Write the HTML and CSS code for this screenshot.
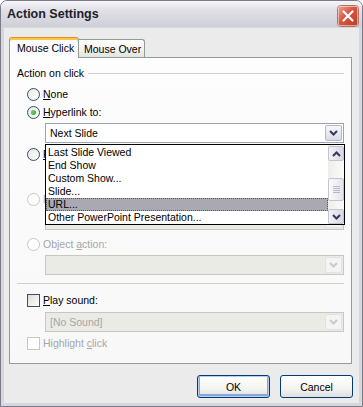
FILE: index.html
```html
<!DOCTYPE html>
<html lang="en">
<head>
    <meta charset="UTF-8">
    <title>Action Settings</title>
    <link rel="stylesheet" href="styles.css">
</head>
<body>
    <div class="window">
        <div class="titlebar">
            <span class="title">Action Settings</span>
            <svg class="close" width="22" height="22" viewBox="0 0 22 22">
                <defs>
                    <linearGradient id="closeFill" x1="0" y1="0" x2="1" y2="1">
                        <stop offset="0" stop-color="#eea08c"/>
                        <stop offset="0.45" stop-color="#d9563f"/>
                        <stop offset="1" stop-color="#bf3a27"/>
                    </linearGradient>
                </defs>
                <rect x="0.5" y="0.5" width="21" height="21" rx="3" fill="#fff" stroke="#a8766c"/>
                <rect x="1.5" y="1.5" width="19" height="19" rx="2" fill="url(#closeFill)"/>
                <path d="M6.5 6.5 L15.5 15.5 M15.5 6.5 L6.5 15.5" stroke="#ffffff" stroke-width="2.2" stroke-linecap="round"/>
            </svg>
        </div>
        <div class="client">
            <div class="tabs">
                <div class="tab active">Mouse Click</div>
                <div class="tab">Mouse Over</div>
            </div>
            <div class="panel">
                <div class="group-title"><span>Action on click</span><span class="line"></span></div>

                <div class="opt first"><span class="radio"></span><span class="label"><u>N</u>one</span></div>
                <div class="opt tight"><span class="radio on"></span><span class="label"><u>H</u>yperlink to:</span></div>
                <div class="combo-wrap">
                    <div class="combo"><span class="value">Next Slide</span><span class="drop"><svg width="9" height="6" viewBox="0 0 9 6"><path d="M1 1 L4.5 4.5 L8 1" fill="none" stroke="#2f3c5c" stroke-width="2"/></svg></span></div>
                    <div class="list">
                        <ul class="items">
                            <li>Last Slide Viewed</li>
                            <li>End Show</li>
                            <li>Custom Show...</li>
                            <li>Slide...</li>
                            <li class="selected">URL...</li>
                            <li>Other PowerPoint Presentation...</li>
                        </ul>
                        <div class="scrollbar">
                            <span class="sb-btn"><svg width="9" height="6" viewBox="0 0 9 6"><path d="M1 5 L4.5 1.5 L8 5" fill="none" stroke="#2f3c5c" stroke-width="2"/></svg></span>
                            <span class="sb-thumb"><svg width="7" height="7" viewBox="0 0 7 7"><path d="M0 0.5 H7 M0 2.5 H7 M0 4.5 H7 M0 6.5 H7" stroke="#b4b8c8" stroke-width="1"/></svg></span>
                            <span class="sb-btn down"><svg width="9" height="6" viewBox="0 0 9 6"><path d="M1 1 L4.5 4.5 L8 1" fill="none" stroke="#2f3c5c" stroke-width="2"/></svg></span>
                        </div>
                    </div>
                </div>

                <div class="opt"><span class="radio"></span><span class="label"><u>R</u>un program:</span></div>
                <div class="textbox"></div>
                <div class="opt wide disabled"><span class="radio"></span><span class="label">Run <u>m</u>acro:</span></div>
                <div class="combo disabled"><span class="value"></span><span class="drop"><svg width="9" height="6" viewBox="0 0 9 6"><path d="M1 1 L4.5 4.5 L8 1" fill="none" stroke="#c9c9cf" stroke-width="2"/></svg></span></div>
                <div class="opt wide disabled"><span class="radio"></span><span class="label">Object <u>a</u>ction:</span></div>
                <div class="combo disabled"><span class="value"></span><span class="drop"><svg width="9" height="6" viewBox="0 0 9 6"><path d="M1 1 L4.5 4.5 L8 1" fill="none" stroke="#c9c9cf" stroke-width="2"/></svg></span></div>

                <div class="sep"></div>

                <div class="opt sound"><span class="check"></span><span class="label"><u>P</u>lay sound:</span></div>
                <div class="combo disabled sound-combo"><span class="value">[No Sound]</span><span class="drop"><svg width="9" height="6" viewBox="0 0 9 6"><path d="M1 1 L4.5 4.5 L8 1" fill="none" stroke="#c9c9cf" stroke-width="2"/></svg></span></div>
                <div class="opt tight disabled"><span class="check"></span><span class="label">Highlight <u>c</u>lick</span></div>
            </div>
            <div class="buttons">
                <button class="btn default">OK</button>
                <button class="btn">Cancel</button>
            </div>
        </div>
    </div>
</body>
</html>
```

FILE: styles.css
```css
body {
    margin: 0;
    padding: 0;
    font-family: "Liberation Sans", Arial, sans-serif;
    font-size: 10.5px;
    color: #000;
    background: #fff;
}

.window {
    width: 363px;
    height: 407px;
    box-sizing: border-box;
    border: 1px solid #7c7c88;
    border-radius: 7px 7px 0 0;
    background: #d6d6de;
    display: flex;
    flex-direction: column;
    overflow: hidden;
}

.titlebar {
    height: 26px;
    display: flex;
    align-items: center;
    justify-content: space-between;
    padding: 0 3px 0 6px;
    background: linear-gradient(#f6f6f9, #e0e0e8 35%, #cfcfd8);
}

.title {
    font-weight: bold;
    font-size: 12.5px;
    color: #1e1e24;
}

.close {
    flex: none;
    display: block;
    margin-top: 3px;
}

.client {
    flex: 1;
    margin: 1px 3px 3px;
    background: #ebebeb;
    padding: 9px 0 0 5px;
}

.tabs {
    display: flex;
    align-items: flex-end;
    height: 20px;
}

.tab {
    box-sizing: border-box;
    height: 18px;
    width: 66px;
    padding: 3px 0 0 5px;
    border: 1px solid #919b9c;
    border-bottom: none;
    border-left: none;
    border-radius: 0 3px 0 0;
    background: linear-gradient(#ffffff, #f0f0ec 60%, #e4e4de);
    white-space: nowrap;
}

.tab.active {
    position: relative;
    z-index: 1;
    width: 70px;
    height: 21px;
    margin-bottom: -1px;
    padding: 4px 0 0 7px;
    border-left: 1px solid #919b9c;
    border-top: 1px solid #e68b2c;
    border-radius: 3px 3px 0 0;
    box-shadow: inset 0 2px 0 #ffc73c;
    background: #fcfcfe;
}

.panel {
    width: 343px;
    height: 307px;
    box-sizing: border-box;
    border: 1px solid #919b9c;
    background: linear-gradient(#fdfdfe, #f8f8f8);
    padding: 8px 7px 0 7px;
}

.group-title {
    display: flex;
    align-items: center;
    height: 14px;
}

.group-title .line {
    flex: 1;
    height: 1px;
    margin-left: 4px;
    background: #d0d0bf;
}

.opt {
    display: flex;
    align-items: center;
    height: 14px;
    margin-top: 4px;
    padding-left: 10px;
}

.opt.first {
    margin-top: 7px;
}

.opt.wide {
    margin-top: 7px;
}

.opt.sound {
    margin-top: 9px;
}

.opt.disabled {
    color: #a6a6a6;
}

.label {
    white-space: nowrap;
}

.radio {
    width: 11px;
    height: 11px;
    border: 1px solid #3a4e6a;
    border-radius: 50%;
    background: radial-gradient(circle at 65% 65%, #ffffff, #e2e2dc);
    margin-right: 3px;
    display: flex;
    align-items: center;
    justify-content: center;
}

.radio.on::after {
    content: "";
    width: 5px;
    height: 5px;
    border-radius: 50%;
    background: radial-gradient(circle at 40% 40%, #6fd66f, #1f9a1f);
}

.opt.disabled .radio {
    border-color: #cac8bb;
    background: #fff;
}

.check {
    width: 11px;
    height: 11px;
    border: 1px solid #3a4e6a;
    background: linear-gradient(135deg, #dcdcd6, #ffffff);
    margin-right: 3px;
}

.opt.disabled .check {
    border-color: #cac8bb;
    background: #fff;
}

.combo-wrap {
    position: relative;
    margin: 4px 0 0 28px;
}

.combo {
    box-sizing: border-box;
    height: 20px;
    border: 1px solid #9aa6b8;
    background: #fff;
    display: flex;
    align-items: center;
    padding: 1px;
}

.combo-wrap .combo {
    margin: 0;
}

.combo.disabled {
    margin: 4px 0 0 28px;
    background: #ebebe6;
    border-color: #c9c8c0;
    color: #a6a6a6;
}

.combo.sound-combo {
    margin-top: 5px;
}

.combo .value {
    flex: 1;
    padding-left: 3px;
}

.combo .drop {
    width: 17px;
    height: 16px;
    box-sizing: border-box;
    border: 1px solid #b8b8c8;
    border-radius: 2px;
    background: linear-gradient(#f6f6fa, #dcdce6);
    display: flex;
    align-items: center;
    justify-content: center;
}

.combo.disabled .drop {
    border-color: #e2e2e2;
    background: #f4f4f4;
}

.list {
    position: absolute;
    top: 21px;
    left: 0;
    width: 300px;
    height: 81px;
    box-sizing: border-box;
    border: 1px solid #000;
    background: #fff;
    display: flex;
    z-index: 2;
}

.items {
    list-style: none;
    margin: 0;
    padding: 1px 0 0 0;
    flex: 1;
}

.items li {
    height: 13px;
    line-height: 13px;
    padding-left: 2px;
    white-space: nowrap;
}

.items li.selected {
    background: #a9a9b1;
    outline: 1px dotted #55555c;
    outline-offset: -1px;
}

.scrollbar {
    width: 16px;
    padding-top: 1px;
    background: linear-gradient(90deg, #eeeeea, #fbfbf9);
    display: flex;
    flex-direction: column;
}

.sb-btn {
    height: 15px;
    box-sizing: border-box;
    border: 1px solid #c4c4d0;
    border-radius: 2px;
    background: linear-gradient(90deg, #f2f2f8, #d8d8e4);
    display: flex;
    align-items: center;
    justify-content: center;
}

.sb-btn.down {
    margin-top: auto;
}

.sb-thumb {
    margin-top: 17px;
    height: 23px;
    box-sizing: border-box;
    border: 1px solid #c4c4d0;
    border-radius: 2px;
    background: linear-gradient(90deg, #fafafc, #e4e4ec);
    display: flex;
    align-items: center;
    justify-content: center;
}

.textbox {
    height: 20px;
    margin: 4px 0 0 28px;
}

.sep {
    height: 1px;
    margin-top: 8px;
    background: #d0d0bf;
}

.buttons {
    display: flex;
    justify-content: flex-end;
    gap: 10px;
    padding: 11px 6px 0 0;
}

.btn {
    width: 73px;
    height: 23px;
    border: 1px solid #003c74;
    border-radius: 3px;
    background: linear-gradient(#ffffff, #f4f4f0 60%, #dedee0);
    font-family: "Liberation Sans", Arial, sans-serif;
    font-size: 10.5px;
    color: #000;
    padding: 0;
}

.btn.default {
    box-shadow: inset 0 0 0 1px #b8cdf2, inset 0 -1px 0 2px #88a4e0;
}
```
